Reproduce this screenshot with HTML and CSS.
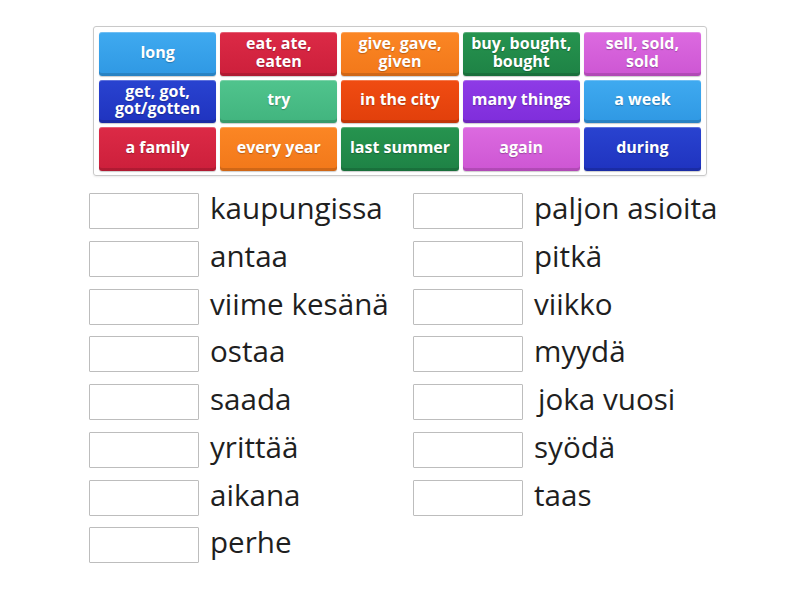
FILE: index.html
```html
<!DOCTYPE html>
<html>
<head>
<meta charset="utf-8">
<link rel="stylesheet" href="styles.css">
</head>
<body>
<div class="page">
  <div class="bank">
    <div class="tile c-sky"><span>long</span></div>
    <div class="tile c-red"><span>eat, ate, eaten</span></div>
    <div class="tile c-orange"><span>give, gave, given</span></div>
    <div class="tile c-green"><span>buy, bought, bought</span></div>
    <div class="tile c-pink"><span>sell, sold, sold</span></div>
    <div class="tile c-blue"><span>get, got, got/gotten</span></div>
    <div class="tile c-mint"><span>try</span></div>
    <div class="tile c-flame"><span>in the city</span></div>
    <div class="tile c-purple"><span>many things</span></div>
    <div class="tile c-sky"><span>a week</span></div>
    <div class="tile c-red"><span>a family</span></div>
    <div class="tile c-orange"><span>every year</span></div>
    <div class="tile c-green"><span>last summer</span></div>
    <div class="tile c-pink"><span>again</span></div>
    <div class="tile c-blue"><span>during</span></div>
  </div>
  <div class="targets">
    <div class="col">
      <div class="row"><div class="slot"></div><div class="label">kaupungissa</div></div>
      <div class="row"><div class="slot"></div><div class="label">antaa</div></div>
      <div class="row"><div class="slot"></div><div class="label">viime kesänä</div></div>
      <div class="row"><div class="slot"></div><div class="label">ostaa</div></div>
      <div class="row"><div class="slot"></div><div class="label">saada</div></div>
      <div class="row"><div class="slot"></div><div class="label">yrittää</div></div>
      <div class="row"><div class="slot"></div><div class="label">aikana</div></div>
      <div class="row"><div class="slot"></div><div class="label">perhe</div></div>
    </div>
    <div class="col">
      <div class="row"><div class="slot"></div><div class="label">paljon asioita</div></div>
      <div class="row"><div class="slot"></div><div class="label">pitkä</div></div>
      <div class="row"><div class="slot"></div><div class="label">viikko</div></div>
      <div class="row"><div class="slot"></div><div class="label">myydä</div></div>
      <div class="row"><div class="slot"></div><div class="label indent">joka vuosi</div></div>
      <div class="row"><div class="slot"></div><div class="label">syödä</div></div>
      <div class="row"><div class="slot"></div><div class="label">taas</div></div>
    </div>
  </div>
</div>
</body>
</html>
```
FILE: styles.css
```css
html, body {
  margin: 0;
  padding: 0;
  background: #ffffff;
}
body {
  font-family: "Open Sans", "DejaVu Sans", sans-serif;
  color: #222222;
}
.page {
  width: 800px;
  height: 600px;
  padding-top: 26px;
  box-sizing: border-box;
}
.bank {
  margin-left: 93px;
  width: 614px;
  box-sizing: border-box;
  border: 1px solid #c9c9c9;
  border-radius: 3px;
  padding: 5px 5px 4.5px 5px;
  display: grid;
  grid-template-columns: repeat(5, 1fr);
  grid-auto-rows: 43.5px;
  gap: 4px 4px;
  box-shadow: 0 1px 2px rgba(0,0,0,0.08);
}
.tile {
  border-radius: 3px;
  display: flex;
  align-items: center;
  justify-content: center;
  text-align: center;
  color: #ffffff;
  font-weight: 700;
  font-size: 16px;
  line-height: 17.7px;
  padding: 0 6px 2px;
  box-sizing: border-box;
  text-shadow: 0 1px 1px rgba(0,0,0,0.25);
  box-shadow: inset 0 -3px 0 rgba(0,0,0,0.14), inset 0 1px 0 rgba(255,255,255,0.25), 0 1px 1px rgba(0,0,0,0.2);
}
.c-sky    { background: linear-gradient(#3faaf0, #2f98e3); }
.c-red    { background: linear-gradient(#dc2a46, #cc1f3b); }
.c-orange { background: linear-gradient(#fb8624, #f2781a); }
.c-green  { background: linear-gradient(#26944f, #1e8245); }
.c-pink   { background: linear-gradient(#dc6ae0, #cd56d3); }
.c-blue   { background: linear-gradient(#2943d0, #1f33bf); }
.c-mint   { background: linear-gradient(#50c48d, #41b47e); }
.c-flame  { background: linear-gradient(#f04c12, #e13f0b); }
.c-purple { background: linear-gradient(#8e3be6, #7f2ddb); }

.targets {
  display: flex;
  margin-left: 89px;
  margin-top: 17px;
}
.col {
  width: 324px;
  display: flex;
  flex-direction: column;
  gap: 11.75px;
}
.row {
  display: flex;
  align-items: flex-start;
}
.slot {
  width: 110px;
  height: 36px;
  box-sizing: border-box;
  border: 1px solid #bdbdbd;
  border-radius: 1px;
  background: #ffffff;
  flex: none;
}
.label {
  margin-left: 11px;
  font-size: 29.6px;
  line-height: 29px;
  color: #1f1f1f;
  white-space: nowrap;
}
.label.indent {
  margin-left: 15px;
}
```
